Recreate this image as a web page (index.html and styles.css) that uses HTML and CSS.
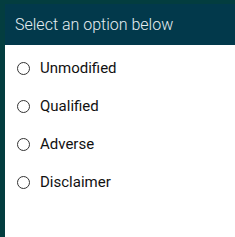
FILE: index.html
```html
<!DOCTYPE html>
<html lang="en">
<head>
    <meta charset="UTF-8">
    <title>Opinion</title>
    <link rel="stylesheet" href="styles.css">
</head>
<body>
    <div class="panel">
        <div class="panel-header">Select an option below</div>
        <div class="options">
            <label class="option"><input type="radio" name="opinion"><span>Unmodified</span></label>
            <label class="option"><input type="radio" name="opinion"><span>Qualified</span></label>
            <label class="option"><input type="radio" name="opinion"><span>Adverse</span></label>
            <label class="option"><input type="radio" name="opinion"><span>Disclaimer</span></label>
        </div>
    </div>
</body>
</html>
```

FILE: styles.css
```css
* {
    margin: 0;
    padding: 0;
    box-sizing: border-box;
    font-family: Roboto, "Liberation Sans", sans-serif;
}

html, body {
    height: 100%;
}

body {
    background: #033d3f;
    padding: 4px 0 0 5px;
}

.panel {
    background: #fff;
    height: 100%;
}

.panel-header {
    height: 41px;
    background: #02394b;
    color: #e6eef2;
    font-size: 16px;
    font-weight: 300;
    padding-left: 10px;
    display: flex;
    align-items: center;
}

.options {
    display: flex;
    flex-direction: column;
    padding: 13px 0 0 12px;
    gap: 18px;
}

.option {
    display: flex;
    align-items: center;
    gap: 10px;
    height: 20px;
    font-size: 15px;
    color: #111;
    cursor: pointer;
}

.option input {
    appearance: none;
    width: 13px;
    height: 13px;
    border: 1.5px solid #333;
    border-radius: 50%;
    margin: 0;
}

.option input:checked {
    background: radial-gradient(#333 40%, #fff 45%);
}
```
